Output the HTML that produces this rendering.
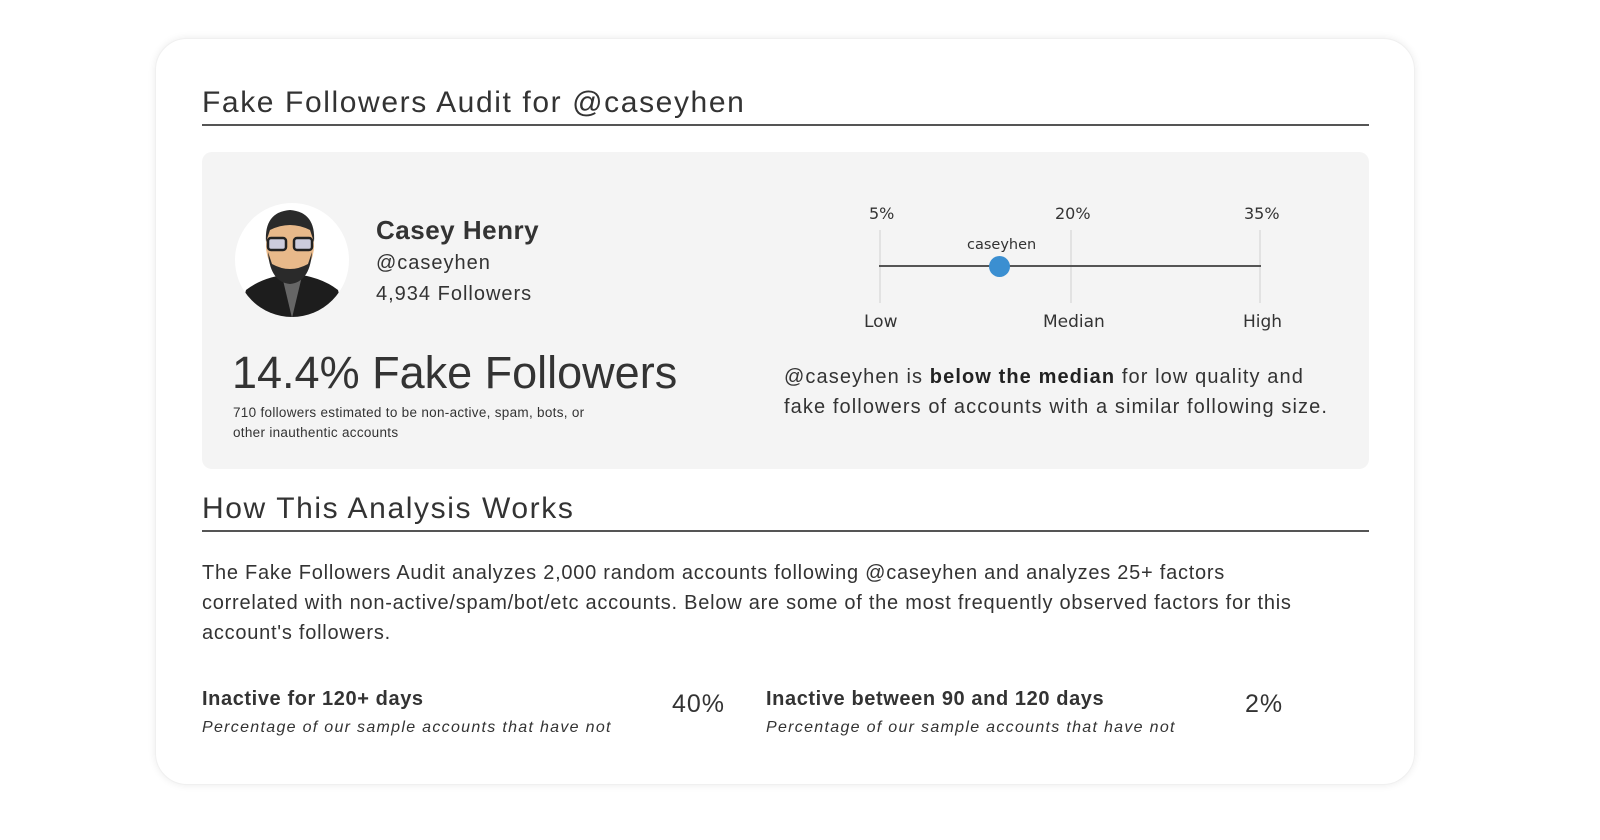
<!DOCTYPE html>
<html><head><meta charset="utf-8"><style>
*{margin:0;padding:0;box-sizing:border-box}
body{width:1600px;height:840px;background:#fff;font-family:"Liberation Sans",sans-serif;color:#333;position:relative;overflow:hidden}
.card{position:absolute;left:155px;top:38px;width:1260px;height:747px;border-radius:32px;background:#fff;box-shadow:0 0 8px rgba(0,0,0,0.08);border:1px solid #f0f0f0}
.a{position:absolute;white-space:nowrap}
h2{position:absolute;font-weight:normal;font-size:30px;color:#333;letter-spacing:1.6px}
.rule{position:absolute;left:202px;width:1167px;height:2px;background:#555}
.panel{position:absolute;left:202px;top:152px;width:1167px;height:317px;background:#f4f4f4;border-radius:10px}
.sc{font-family:"DejaVu Sans","Liberation Sans",sans-serif;font-size:16px;color:#333}
.vl{position:absolute;width:2px;background:#e2e2e2;top:230px;height:73px}
</style></head><body>
<div class="card"></div>
<h2 style="left:202px;top:86px">Fake Followers Audit for @caseyhen</h2>
<div class="rule" style="top:124px"></div>
<div class="panel"></div>
<svg class="a" style="left:234px;top:202px" width="116" height="116" viewBox="0 0 116 116">
<circle cx="58" cy="58" r="57" fill="#fff"/>
<clipPath id="c"><circle cx="58" cy="58" r="57"/></clipPath>
<g clip-path="url(#c)">
<path d="M5 116 L12 88 Q30 74 58 72 Q86 74 104 88 L111 116Z" fill="#1d1d1d"/>
<path d="M48 74 L58 116 L68 74Z" fill="#666"/>
<ellipse cx="56" cy="44" rx="24" ry="30" fill="#e8b98a"/>
<path d="M32 40 Q30 10 56 8 Q82 10 80 40 L76 28 Q56 18 36 28Z" fill="#2a2a2a"/>
<path d="M34 50 Q36 80 56 82 Q76 80 78 50 L74 62 Q56 72 38 62Z" fill="#2a2a2a"/>
<rect x="34" y="36" width="18" height="12" rx="3" fill="#ccd" stroke="#222" stroke-width="2.5"/>
<rect x="60" y="36" width="18" height="12" rx="3" fill="#ccd" stroke="#222" stroke-width="2.5"/>
</g></svg>
<div class="a" style="left:376px;top:215px;font-size:26px;font-weight:bold;color:#333;letter-spacing:0.5px">Casey Henry</div>
<div class="a" style="left:376px;top:252px;font-size:20px;letter-spacing:1px">@caseyhen</div>
<div class="a" style="left:376px;top:283px;font-size:20px;letter-spacing:1px">4,934 Followers</div>
<div class="a" style="left:232px;top:347px;font-size:45px;color:#333">14.4% Fake Followers</div>
<div class="a" style="left:233px;top:403px;font-size:13.5px;line-height:20px;letter-spacing:0.3px">710 followers estimated to be non-active, spam, bots, or<br>other inauthentic accounts</div>
<div class="a sc" style="left:869px;top:204px">5%</div>
<div class="a sc" style="left:1055px;top:204px">20%</div>
<div class="a sc" style="left:1244px;top:204px">35%</div>
<div class="vl" style="left:879px"></div><div class="vl" style="left:1070px"></div><div class="vl" style="left:1259px"></div>
<div class="a" style="left:879px;top:265px;width:382px;height:2px;background:#555"></div>
<div class="a sc" style="left:967px;top:237px;font-size:14.5px">caseyhen</div>
<div class="a" style="left:989px;top:256px;width:21px;height:21px;border-radius:50%;background:#3b8fd1"></div>
<div class="a sc" style="left:864px;top:312px;font-size:17px">Low</div>
<div class="a sc" style="left:1043px;top:312px;font-size:17px">Median</div>
<div class="a sc" style="left:1243px;top:312px;font-size:17px">High</div>
<div class="a" style="left:784px;top:362px;font-size:20px;line-height:30px;letter-spacing:1.1px">@caseyhen is <b style="font-weight:600;color:#222">below the median</b> for low quality and<br>fake followers of accounts with a similar following size.</div>
<h2 style="left:202px;top:492px">How This Analysis Works</h2>
<div class="rule" style="top:530px"></div>
<div class="a" style="left:202px;top:558px;font-size:20px;line-height:30px;letter-spacing:0.75px">The Fake Followers Audit analyzes 2,000 random accounts following @caseyhen and analyzes 25+ factors<br>correlated with non-active/spam/bot/etc accounts. Below are some of the most frequently observed factors for this<br>account's followers.</div>
<div class="a" style="left:202px;top:688px;font-size:20px;font-weight:bold;letter-spacing:0.6px">Inactive for 120+ days</div>
<div class="a" style="left:202px;top:719px;font-size:16px;font-style:italic;letter-spacing:1.3px">Percentage of our sample accounts that have not</div>
<div class="a" style="left:672px;top:690px;font-size:25px;letter-spacing:1px">40%</div>
<div class="a" style="left:766px;top:688px;font-size:20px;font-weight:bold;letter-spacing:0.6px">Inactive between 90 and 120 days</div>
<div class="a" style="left:766px;top:719px;font-size:16px;font-style:italic;letter-spacing:1.3px">Percentage of our sample accounts that have not</div>
<div class="a" style="left:1245px;top:690px;font-size:25px;letter-spacing:1px">2%</div>
</body></html>
